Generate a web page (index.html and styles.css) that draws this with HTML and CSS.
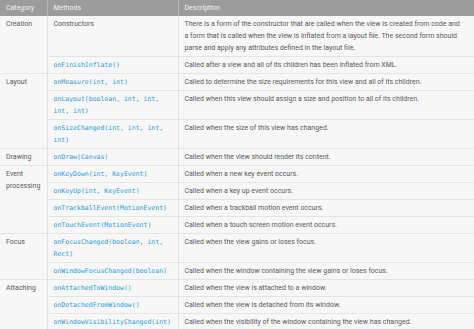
FILE: index.html
```html
<!DOCTYPE html>
<html>
<head>
<meta charset="utf-8">
<link rel="stylesheet" href="styles.css">
</head>
<body>
<table class="api">
  <colgroup>
    <col class="c-cat">
    <col class="c-meth">
    <col class="c-desc">
  </colgroup>
  <thead>
    <tr><th>Category</th><th>Methods</th><th>Description</th></tr>
  </thead>
  <tbody>
    <tr>
      <td rowspan="2" class="cat">Creation</td>
      <td class="plain">Constructors</td>
      <td>There is a form of the constructor that are called when the view is created from code and a form that is called when the view is inflated from a layout file. The second form should parse and apply any attributes defined in the layout file.</td>
    </tr>
    <tr><td><code>onFinishInflate()</code></td><td>Called after a view and all of its children has been inflated from XML.</td></tr>
    <tr>
      <td rowspan="3" class="cat">Layout</td>
      <td><code>onMeasure(int, int)</code></td>
      <td>Called to determine the size requirements for this view and all of its children.</td>
    </tr>
    <tr><td><code>onLayout(boolean, int, int, int, int)</code></td><td>Called when this view should assign a size and position to all of its children.</td></tr>
    <tr><td><code>onSizeChanged(int, int, int, int)</code></td><td>Called when the size of this view has changed.</td></tr>
    <tr>
      <td class="cat">Drawing</td>
      <td><code>onDraw(Canvas)</code></td>
      <td>Called when the view should render its content.</td>
    </tr>
    <tr>
      <td rowspan="4" class="cat">Event processing</td>
      <td><code>onKeyDown(int, KeyEvent)</code></td>
      <td>Called when a new key event occurs.</td>
    </tr>
    <tr><td><code>onKeyUp(int, KeyEvent)</code></td><td>Called when a key up event occurs.</td></tr>
    <tr><td><code>onTrackballEvent(MotionEvent)</code></td><td>Called when a trackball motion event occurs.</td></tr>
    <tr><td><code>onTouchEvent(MotionEvent)</code></td><td>Called when a touch screen motion event occurs.</td></tr>
    <tr>
      <td rowspan="2" class="cat">Focus</td>
      <td><code>onFocusChanged(boolean, int, Rect)</code></td>
      <td>Called when the view gains or loses focus.</td>
    </tr>
    <tr><td><code>onWindowFocusChanged(boolean)</code></td><td>Called when the window containing the view gains or loses focus.</td></tr>
    <tr>
      <td rowspan="3" class="cat">Attaching</td>
      <td><code>onAttachedToWindow()</code></td>
      <td>Called when the view is attached to a window.</td>
    </tr>
    <tr><td><code>onDetachedFromWindow()</code></td><td>Called when the view is detached from its window.</td></tr>
    <tr><td><code>onWindowVisibilityChanged(int)</code></td><td>Called when the visibility of the window containing the view has changed.</td></tr>
  </tbody>
</table>
</body>
</html>
```
FILE: styles.css
```css
html, body {
  margin: 0;
  padding: 0;
  background: #ffffff;
}
.api {
  width: 474px;
  border-collapse: collapse;
  table-layout: fixed;
  font-family: Roboto, "Liberation Sans", sans-serif;
  font-size: 7px;
  line-height: 12px;
  color: #5a5a5a;
}
.c-cat { width: 47px; }
.c-meth { width: 131px; }
.c-desc { width: 296px; }
.api th {
  background: #9c9c9c;
  color: #f0f0f0;
  font-weight: 400;
  text-align: left;
  height: 16px;
  padding: 0 6px;
  border-left: 1px solid #b4b4b4;
}
.api th:first-child { border-left: none; }
.api td {
  background: #f7f7f7;
  vertical-align: top;
  padding: 2px 10px 2px 6px;
  border-bottom: 1px solid #e4e4e4;
  border-left: 1px solid #e4e4e4;
}
.api td.cat { border-left: none; }
.api code {
  font-family: "DejaVu Sans Mono", monospace;
  font-size: 6.5px;
  color: #1f9ce0;
}
```
